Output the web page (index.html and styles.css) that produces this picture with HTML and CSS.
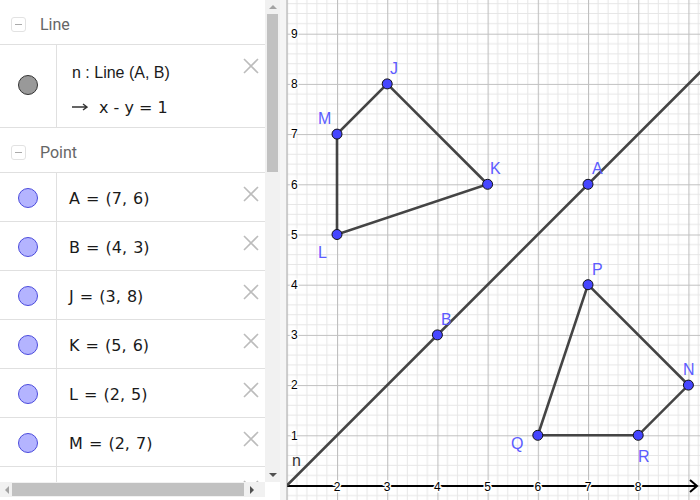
FILE: index.html
```html
<!DOCTYPE html>
<html>
<head>
<meta charset="utf-8">
<link rel="stylesheet" href="styles.css">
</head>
<body>
<div class="app">
  <div class="panel">
    <div class="scroller">
      <div class="content">
        <div class="header">
          <span class="toggle"><span class="minus"></span></span>
          <span class="htitle">Line</span>
        </div>
        <div class="item item-tall">
          <div class="marker"><span class="dot dot-gray"></span></div>
          <div class="body">
            <div class="def">n : Line (A, B)</div>
            <div class="val"><svg class="arrow" viewBox="0 0 16 8"><path d="M0 4H15M11 1L15 4L11 7"/></svg><span>x - y = 1</span></div>
            <svg class="close" viewBox="0 0 16 16"><path d="M1 1L15 15M15 1L1 15"/></svg>
          </div>
        </div>
        <div class="header">
          <span class="toggle"><span class="minus"></span></span>
          <span class="htitle">Point</span>
        </div>
        <div class="item">
          <div class="marker"><span class="dot"></span></div>
          <div class="body"><div class="eq">A = (7, 6)</div><svg class="close" viewBox="0 0 16 16"><path d="M1 1L15 15M15 1L1 15"/></svg></div>
        </div>
        <div class="item">
          <div class="marker"><span class="dot"></span></div>
          <div class="body"><div class="eq">B = (4, 3)</div><svg class="close" viewBox="0 0 16 16"><path d="M1 1L15 15M15 1L1 15"/></svg></div>
        </div>
        <div class="item">
          <div class="marker"><span class="dot"></span></div>
          <div class="body"><div class="eq">J = (3, 8)</div><svg class="close" viewBox="0 0 16 16"><path d="M1 1L15 15M15 1L1 15"/></svg></div>
        </div>
        <div class="item">
          <div class="marker"><span class="dot"></span></div>
          <div class="body"><div class="eq">K = (5, 6)</div><svg class="close" viewBox="0 0 16 16"><path d="M1 1L15 15M15 1L1 15"/></svg></div>
        </div>
        <div class="item">
          <div class="marker"><span class="dot"></span></div>
          <div class="body"><div class="eq">L = (2, 5)</div><svg class="close" viewBox="0 0 16 16"><path d="M1 1L15 15M15 1L1 15"/></svg></div>
        </div>
        <div class="item">
          <div class="marker"><span class="dot"></span></div>
          <div class="body"><div class="eq">M = (2, 7)</div><svg class="close" viewBox="0 0 16 16"><path d="M1 1L15 15M15 1L1 15"/></svg></div>
        </div>
        <div class="item">
          <div class="marker"><span class="dot"></span></div>
          <div class="body"><svg class="close" viewBox="0 0 16 16"><path d="M1 1L15 15M15 1L1 15"/></svg></div>
        </div>
      </div>
      <div class="vbar">
        <span class="tri tri-up"></span>
        <span class="vthumb"></span>
        <span class="tri tri-down"></span>
      </div>
      <div class="hbar">
        <span class="tri tri-left"></span>
        <span class="hthumb"></span>
        <span class="tri tri-right"></span>
      </div>
      <div class="corner"></div>
    </div>
  </div>
  <div class="splitter"></div>
  <svg class="graphics" viewBox="287 0 413 500" width="413" height="500">
    <defs>
      <pattern id="grid" patternUnits="userSpaceOnUse" x="236.6" y="485.5" width="50.2" height="50.2">
        <g stroke="#e6e6e6" stroke-width="1">
          <line x1="10.04" y1="0" x2="10.04" y2="50.2"/>
          <line x1="20.08" y1="0" x2="20.08" y2="50.2"/>
          <line x1="30.12" y1="0" x2="30.12" y2="50.2"/>
          <line x1="40.16" y1="0" x2="40.16" y2="50.2"/>
          <line y1="10.04" x1="0" y2="10.04" x2="50.2"/>
          <line y1="20.08" x1="0" y2="20.08" x2="50.2"/>
          <line y1="30.12" x1="0" y2="30.12" x2="50.2"/>
          <line y1="40.16" x1="0" y2="40.16" x2="50.2"/>
        </g>
        <g stroke="#c0c0c0" stroke-width="1.2">
          <line x1="0.5" y1="0" x2="0.5" y2="50.2"/>
          <line x1="0" y1="0.5" x2="50.2" y2="0.5"/>
        </g>
      </pattern>
    </defs>
    <rect x="287" y="0" width="413" height="500" fill="#fff"/>
    <rect x="287" y="0" width="413" height="500" fill="url(#grid)"/>
    <line x1="287" y1="486" x2="697" y2="486" stroke="#000" stroke-width="2"/>
    <path d="M690 480L697 486L690 492" fill="none" stroke="#000" stroke-width="2"/>
    <g class="ticks">
      <text x="337" y="491">2</text>
      <text x="387.2" y="491">3</text>
      <text x="437.4" y="491">4</text>
      <text x="487.6" y="491">5</text>
      <text x="537.8" y="491">6</text>
      <text x="588" y="491">7</text>
      <text x="638.2" y="491">8</text>
    </g>
    <g class="yticks">
      <text x="291" y="439.5">1</text>
      <text x="291" y="389.3">2</text>
      <text x="291" y="339.1">3</text>
      <text x="291" y="288.9">4</text>
      <text x="291" y="238.7">5</text>
      <text x="291" y="188.5">6</text>
      <text x="291" y="138.3">7</text>
      <text x="291" y="88.1">8</text>
      <text x="291" y="37.9">9</text>
    </g>
    <g stroke="#444" stroke-width="2.6" fill="none" stroke-linecap="round">
      <line x1="286.8" y1="485.5" x2="710" y2="62.3"/>
      <polygon points="387.2,83.9 487.6,184.3 337,234.5 337,134.1"/>
      <polygon points="588,284.7 688.4,385.1 638.2,435.3 537.8,435.3"/>
    </g>
    <g fill="#4646ff" stroke="#111" stroke-width="1">
      <circle cx="588" cy="184.3" r="5"/>
      <circle cx="437.4" cy="334.9" r="5"/>
      <circle cx="387.2" cy="83.9" r="5"/>
      <circle cx="487.6" cy="184.3" r="5"/>
      <circle cx="337" cy="234.5" r="5"/>
      <circle cx="337" cy="134.1" r="5"/>
      <circle cx="688.4" cy="385.1" r="5"/>
      <circle cx="588" cy="284.7" r="5"/>
      <circle cx="537.8" cy="435.3" r="5"/>
      <circle cx="638.2" cy="435.3" r="5"/>
    </g>
    <g class="labels">
      <text x="592" y="174">A</text>
      <text x="441" y="325">B</text>
      <text x="390" y="74">J</text>
      <text x="490" y="174">K</text>
      <text x="318" y="258">L</text>
      <text x="318" y="124">M</text>
      <text x="683" y="375">N</text>
      <text x="592" y="275">P</text>
      <text x="511" y="449">Q</text>
      <text x="638" y="462">R</text>
    </g>
    <text class="nlabel" x="292" y="466">n</text>
  </svg>
</div>
</body>
</html>
```

FILE: styles.css
```css
* { box-sizing: border-box; }
html, body { margin: 0; padding: 0; background: #fff; }
.app {
  display: flex;
  width: 700px;
  height: 500px;
  overflow: hidden;
}
.panel {
  width: 280px;
  height: 500px;
  flex: none;
  background: #fff;
}
.scroller {
  display: grid;
  grid-template-columns: 265px 15px;
  grid-template-rows: 482px 15px;
}
.content {
  overflow: hidden;
  background: #fff;
}
.header {
  height: 45px;
  display: flex;
  align-items: center;
  padding-left: 11px;
  padding-top: 5px;
  border-bottom: 1px solid #e0e0e0;
  font-family: Roboto, "Liberation Sans", sans-serif;
}
.toggle {
  width: 15px;
  height: 15px;
  border: 1px solid #e2e2e2;
  border-radius: 3px;
  display: flex;
  align-items: center;
  justify-content: center;
  margin-right: 14px;
}
.minus {
  width: 7px;
  height: 1px;
  background: #aaa;
}
.htitle {
  color: #666;
  font-size: 16px;
}
.item {
  height: 49px;
  display: flex;
  border-bottom: 1px solid #e0e0e0;
}
.item-tall { height: 83px; }
.marker {
  width: 57px;
  flex: none;
  border-right: 1px solid #e0e0e0;
  display: flex;
  align-items: center;
  justify-content: center;
  padding-top: 2px;
}
.dot {
  width: 20px;
  height: 20px;
  border-radius: 50%;
  background: #b4b4ff;
  border: 1px solid #4b4bdc;
}
.dot-gray {
  background: #999;
  border-color: #333;
  margin-top: -4px;
}
.body {
  flex: 1;
  position: relative;
  display: flex;
  flex-direction: column;
  justify-content: center;
  padding-left: 12px;
  font-family: "DejaVu Sans", sans-serif;
  color: #1a1a1a;
}
.eq {
  font-size: 16px;
  padding-top: 3px;
  word-spacing: 1px;
}
.def {
  font-family: "Liberation Sans", sans-serif;
  font-size: 16px;
  padding-left: 3px;
  margin-top: 8px;
}
.val {
  font-size: 16px;
  margin-top: 16px;
  padding-left: 3px;
  display: flex;
  align-items: center;
}
.arrow {
  width: 16px;
  height: 8px;
  margin-right: 11px;
  fill: none;
  stroke: #333;
  stroke-width: 1.4;
}
.close {
  position: absolute;
  right: 6px;
  top: 13px;
  width: 16px;
  height: 16px;
  fill: none;
  stroke: #bcbcbc;
  stroke-width: 1.6;
}
.vbar {
  background: #f1f1f1;
  position: relative;
  display: flex;
  flex-direction: column;
  align-items: center;
}
.vthumb {
  width: 11px;
  height: 158px;
  background: #c1c1c1;
  margin-top: 1px;
}
.hbar {
  background: #f1f1f1;
  display: flex;
  align-items: center;
}
.hthumb {
  height: 13px;
  width: 232px;
  background: #c1c1c1;
  margin-left: 3px;
}
.corner { background: #fff; }
.tri {
  width: 0;
  height: 0;
  border-style: solid;
  border-color: transparent;
}
.tri-up {
  border-width: 0 4px 4px 4px;
  border-bottom-color: #a3a3a3;
  margin: 5px 0 4px;
}
.tri-down {
  border-width: 4px 4px 0 4px;
  border-top-color: #505050;
  margin-top: auto;
  margin-bottom: 5px;
}
.tri-left {
  border-width: 4px 4px 4px 0;
  border-right-color: #a3a3a3;
  margin-left: 5px;
}
.tri-right {
  border-width: 4px 0 4px 4px;
  border-left-color: #505050;
  margin-left: 6px;
}
.splitter {
  width: 7px;
  flex: none;
  background: #f5f5f5;
  border-right: 1px solid #cfcfcf;
}
.graphics {
  flex: none;
  display: block;
}
.ticks text, .yticks text {
  font-family: "Liberation Sans", sans-serif;
  font-size: 12px;
  fill: #000;
  stroke: #fff;
  stroke-width: 3px;
  paint-order: stroke;
}
.ticks text { text-anchor: middle; }
.labels text {
  font-family: "Liberation Sans", sans-serif;
  font-size: 16px;
  fill: #5c5cff;
}
.nlabel {
  font-family: "Liberation Sans", sans-serif;
  font-size: 16px;
  fill: #333;
}
```
